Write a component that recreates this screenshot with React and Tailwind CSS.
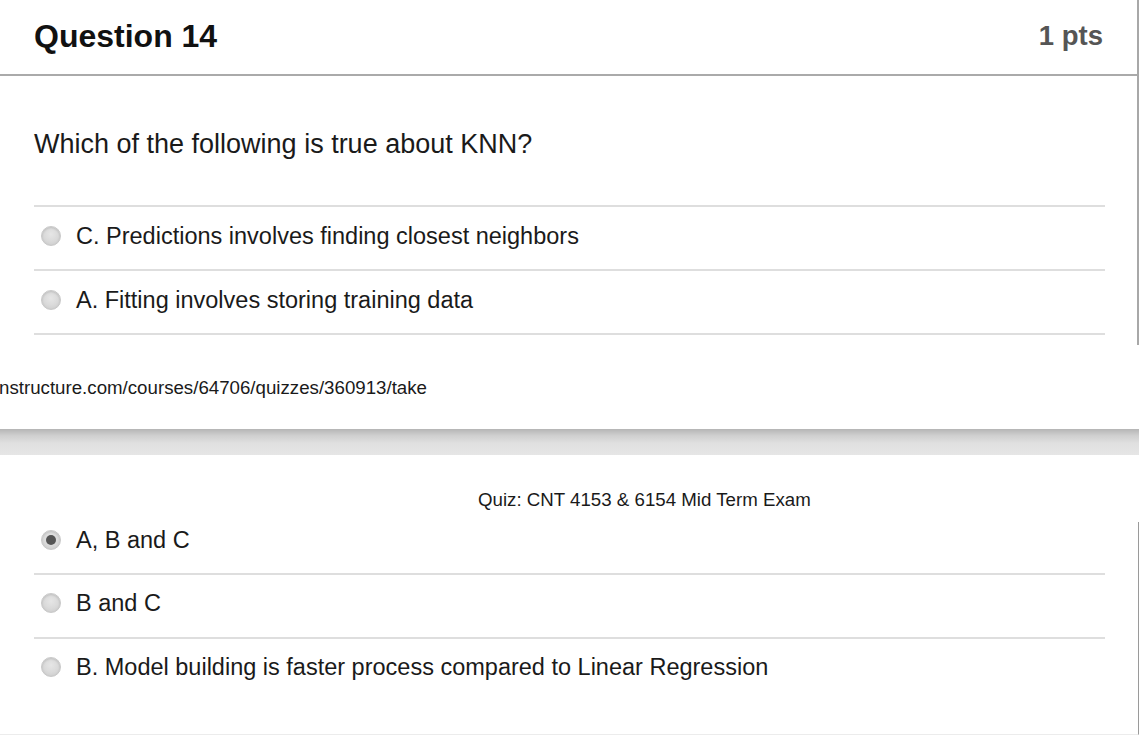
import React from "react";

function Radio({ checked }) {
  return (
    <span className="flex h-[20px] w-[20px] shrink-0 items-center justify-center rounded-full border border-[#c8c8c8] bg-[radial-gradient(circle_at_50%_40%,#e6e6e6_0%,#dadada_50%,#cfcfcf_80%,#e2e2e2_100%)] shadow-[inset_0_1px_2px_rgba(0,0,0,0.12)]">
      {checked && <span className="h-[10px] w-[10px] rounded-full bg-[#555]" />}
    </span>
  );
}

function Option({ label, checked, className }) {
  return (
    <div className={"flex items-center gap-[15px] pl-[7px] " + className}>
      <Radio checked={checked} />
      <span className="text-[23.5px] leading-[28px] text-[#1a1a1a]">{label}</span>
    </div>
  );
}

export default function App() {
  return (
    <div
      className="w-[1139px] h-[735px] overflow-hidden bg-white"
      style={{ fontFamily: '"Liberation Sans", Arial, sans-serif' }}
    >
      {/* top section (screenshot of question) */}
      <div className="h-[345px] w-[1139px] border-r-2 border-[#a8a8a8]">
        <div className="flex h-[76px] items-center justify-between border-b-2 border-[#aaaaaa] px-[34px] pb-[2px]">
          <span className="text-[32px] font-bold leading-[38px] text-[#111]">Question 14</span>
          <span className="text-[27.5px] font-bold leading-[32px] text-[#555]">1 pts</span>
        </div>
        <div className="h-[129px] pt-[52px] pl-[34px]">
          <span className="text-[27px] leading-[32px] text-[#1a1a1a]">
            Which of the following is true about KNN?
          </span>
        </div>
        <div className="mx-[34px] w-[1071px]">
          <Option
            label="C. Predictions involves finding closest neighbors"
            className="h-[64px] border-t-2 border-[#dedede] pb-[4px]"
          />
          <Option
            label="A. Fitting involves storing training data"
            className="h-[66px] border-y-2 border-[#dedede] pb-[4px]"
          />
        </div>
      </div>

      {/* url line */}
      <div className="h-[84px] pt-[32px]">
        <span className="block -ml-[1px] text-[18.7px] leading-[22px] text-[#1a1a1a]">
          nstructure.com/courses/64706/quizzes/360913/take
        </span>
      </div>

      {/* gray band */}
      <div className="h-[26px] w-full bg-[linear-gradient(to_bottom,#b5b5b5_0%,#cfcfcf_25%,#e0e0e0_55%,#e6e6e6_100%)]" />

      {/* bottom section */}
      <div className="h-[67px] pt-[34px]">
        <span className="ml-[478px] block text-[18.7px] leading-[22px] text-[#1a1a1a]">
          Quiz: CNT 4153 &amp; 6154 Mid Term Exam
        </span>
      </div>
      <div className="h-[213px] w-[1139px] border-r border-b border-r-[#9a9a9a] border-b-[#ececec] pl-[34px] pr-[33px]">
        <div className="w-[1071px]">
          <Option
            label="A, B and C"
            checked
            className="h-[53px] border-b-2 border-[#dedede] pb-[16px]"
          />
          <Option
            label="B and C"
            className="h-[64px] border-b-2 border-[#dedede] pb-[6px]"
          />
          <Option
            label="B. Model building is faster process compared to Linear Regression"
            className="h-[62px] pb-[6px]"
          />
        </div>
      </div>
    </div>
  );
}
